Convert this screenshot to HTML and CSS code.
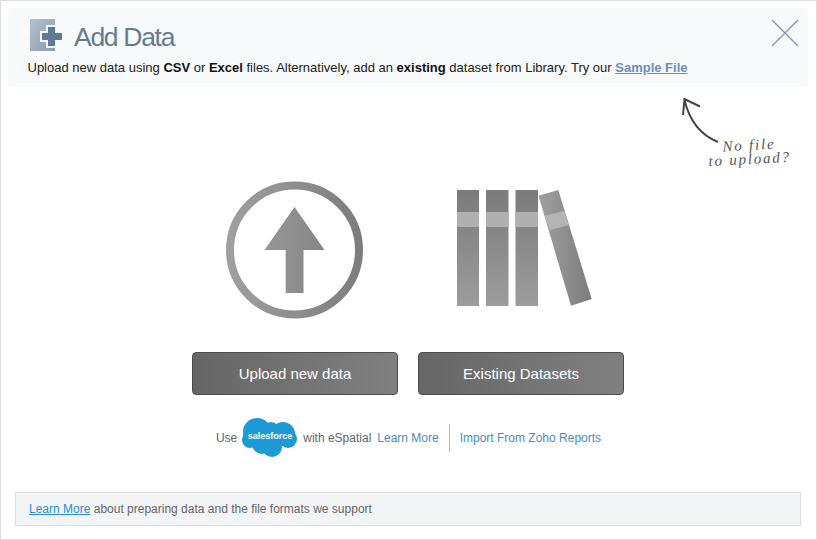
FILE: index.html
```html
<!DOCTYPE html>
<html lang="en">
<head>
    <meta charset="UTF-8">
    <title>Add Data</title>
    <link rel="stylesheet" href="styles.css">
</head>
<body>
    <div class="dialog">
        <div class="header">
            <div class="header-top">
                <div class="title-row">
                    <svg class="add-icon" width="32" height="32" viewBox="0 0 32 32">
                        <defs>
                            <linearGradient id="addBg" x1="0" y1="0" x2="1" y2="1">
                                <stop offset="0" stop-color="#b4c0cd"/>
                                <stop offset="1" stop-color="#8c9cb0"/>
                            </linearGradient>
                        </defs>
                        <rect width="25" height="32" fill="url(#addBg)"/>
                        <path class="add-plus" d="M18 8h7v6h7v7h-7v6h-7v-6h-6v-7h6z"/>
                    </svg>
                    <h1 class="title">Add Data</h1>
                </div>
                <svg class="close-icon" width="28" height="28" viewBox="0 0 28 28">
                    <path d="M1 1l26 26M27 1L1 27" stroke="#7c98b4" stroke-width="1.300" fill="none"/>
                </svg>
            </div>
            <p class="intro">
                Upload new data using <b>CSV</b> or <b>Excel</b> files. Alternatively, add an <b>existing</b>
                dataset from Library. Try our <a class="sample-link" href="#">Sample File</a>
            </p>
        </div>

        <div class="hint">
            <svg class="hint-arrow" width="40" height="50" viewBox="0 0 40 50">
                <path d="M37 45C22 39 9 26 3.500 3M2 18L3.500 2L19 9.500" stroke="#444" stroke-width="2" fill="none"/>
            </svg>
            <p class="hint-text">No file<br>to upload?</p>
        </div>

        <div class="options">
            <div class="option">
                <svg width="206" height="144" viewBox="192 178 206 144">
                    <defs>
                        <linearGradient id="uploadGrad" gradientUnits="userSpaceOnUse" x1="226" y1="0" x2="363" y2="0">
                            <stop offset="0" stop-color="#a0a0a0"/>
                            <stop offset="1" stop-color="#7c7c7c"/>
                        </linearGradient>
                    </defs>
                    <circle cx="294.500" cy="250" r="64.500" fill="none" stroke="url(#uploadGrad)" stroke-width="8"/>
                    <path d="M294.500 207L324.500 250H303.500V293H285.700V250H264.500z" fill="url(#uploadGrad)"/>
                </svg>
                <button class="btn">Upload new data</button>
            </div>
            <div class="option">
                <svg width="206" height="144" viewBox="418 178 206 144">
                    <defs>
                        <linearGradient id="bookGrad" x1="0" y1="0" x2="0" y2="1">
                            <stop offset="0" stop-color="#7c7c7c"/>
                            <stop offset="0.180" stop-color="#808080"/>
                            <stop offset="1" stop-color="#9c9c9c"/>
                        </linearGradient>
                        <linearGradient id="tiltGrad" x1="0" y1="0" x2="1" y2="0">
                            <stop offset="0" stop-color="#a0a0a0"/>
                            <stop offset="1" stop-color="#7c7c7c"/>
                        </linearGradient>
                    </defs>
                    <rect x="457" y="190" width="22" height="116" fill="url(#bookGrad)"/>
                    <rect x="486" y="190" width="22.500" height="116" fill="url(#bookGrad)"/>
                    <rect x="515.500" y="190" width="22.500" height="116" fill="url(#bookGrad)"/>
                    <rect x="457" y="212" width="22" height="15" fill="#b0b0b0"/>
                    <rect x="486" y="212" width="22.500" height="15" fill="#b0b0b0"/>
                    <rect x="515.500" y="212" width="22.500" height="15" fill="#b0b0b0"/>
                    <path d="M538.500 195.700L558.300 190L591.700 299L571 305.700z" fill="url(#tiltGrad)"/>
                    <path d="M544.300 215.700L564 211L569 225L550 230z" fill="#b4b4b4"/>
                </svg>
                <button class="btn">Existing Datasets</button>
            </div>
        </div>

        <div class="sources">
            <span class="use-label">Use</span>
            <svg class="sf-logo" width="55" height="40" viewBox="0 0 55 40">
                <g fill="#1b9ad6">
                    <circle cx="15" cy="14" r="14"/>
                    <circle cx="29" cy="13" r="9"/>
                    <circle cx="41" cy="16" r="12"/>
                    <circle cx="46" cy="21" r="9"/>
                    <circle cx="8" cy="22" r="8"/>
                    <circle cx="20" cy="26" r="10"/>
                    <circle cx="30" cy="29" r="10"/>
                </g>
                <text class="sf-text" x="28" y="21" text-anchor="middle">salesforce</text>
            </svg>
            <span class="with-label">with eSpatial</span>
            <a class="src-link learn-link" href="#">Learn More</a>
            <span class="divider"></span>
            <a class="src-link" href="#">Import From Zoho Reports</a>
        </div>

        <div class="footer">
            <a class="footer-link" href="#">Learn More</a> about preparing data and the file formats we support
        </div>
    </div>
</body>
</html>
```

FILE: styles.css
```css
body {
    margin: 0;
    background-color: #fff;
    font-family: "Liberation Sans", Arial, sans-serif;
}

.dialog {
    position: relative;
    box-sizing: border-box;
    width: 817px;
    height: 540px;
    border: 1px solid #ddd;
    padding: 7px 8px 13px 7px;
    display: flex;
    flex-direction: column;
}

.header {
    box-sizing: border-box;
    height: 79px;
    background-color: #f8f9fb;
    border-radius: 4px;
    padding: 11px 9px 0 20px;
}

.header-top {
    display: flex;
    justify-content: space-between;
    align-items: flex-start;
}

.title-row {
    display: flex;
    align-items: flex-start;
    margin-left: 2px;
}

.add-icon {
    display: block;
}

.add-plus {
    fill: #5f7a98;
    stroke: #f8f9fb;
    stroke-width: 4;
    paint-order: stroke;
}

.title {
    margin: 3px 0 0 12px;
    font-size: 26.500px;
    font-weight: normal;
    letter-spacing: -1.300px;
    color: #667b93;
}

.close-icon {
    display: block;
}

.intro {
    margin: 7px 0 0 -0.500px;
    font-size: 13px;
    color: #222;
}

.intro b {
    color: #111;
}

.sample-link {
    font-weight: bold;
    color: #6a8fbd;
}

.hint {
    position: absolute;
    left: 680px;
    top: 96px;
    width: 120px;
    height: 70px;
}

.hint-arrow {
    display: block;
}

.hint-text {
    position: absolute;
    left: 27px;
    top: 41px;
    margin: 0;
    font-family: "Liberation Serif", serif;
    font-style: italic;
    font-size: 15px;
    line-height: 14px;
    letter-spacing: 1.800px;
    text-align: center;
    white-space: nowrap;
    color: #555;
    transform: rotate(-3deg);
}

.options {
    display: flex;
    justify-content: center;
    gap: 20px;
    margin-top: 91px;
}

.option {
    display: flex;
    flex-direction: column;
    gap: 30px;
}

.option svg {
    display: block;
}

.btn {
    width: 206px;
    height: 43px;
    border: 1px solid #4c4c4c;
    border-radius: 4px;
    background: linear-gradient(to right, #666, #808080);
    color: #fff;
    font-family: "Liberation Sans", Arial, sans-serif;
    font-size: 15px;
}

.sources {
    display: flex;
    justify-content: center;
    align-items: center;
    height: 40px;
    margin-top: 23px;
    padding-left: 1px;
    font-size: 12px;
    color: #666;
}

.sf-logo {
    display: block;
    margin: 0 6px 0 5px;
}

.sf-text {
    fill: #fff;
    font-family: "Liberation Sans", Arial, sans-serif;
    font-size: 9px;
    font-weight: bold;
}

.src-link {
    color: #4a8cc4;
    text-decoration: none;
}

.learn-link {
    margin-left: 6px;
}

.divider {
    width: 1px;
    height: 28px;
    margin: 0 10px;
    background-color: #bbb;
}

.footer {
    box-sizing: border-box;
    height: 34px;
    margin: auto 7px 0;
    padding: 0 13px;
    line-height: 32px;
    background-color: #f3f4f6;
    border: 1px solid #ddd;
    font-size: 12px;
    color: #666;
}

.footer-link {
    color: #2a8fce;
}
```
